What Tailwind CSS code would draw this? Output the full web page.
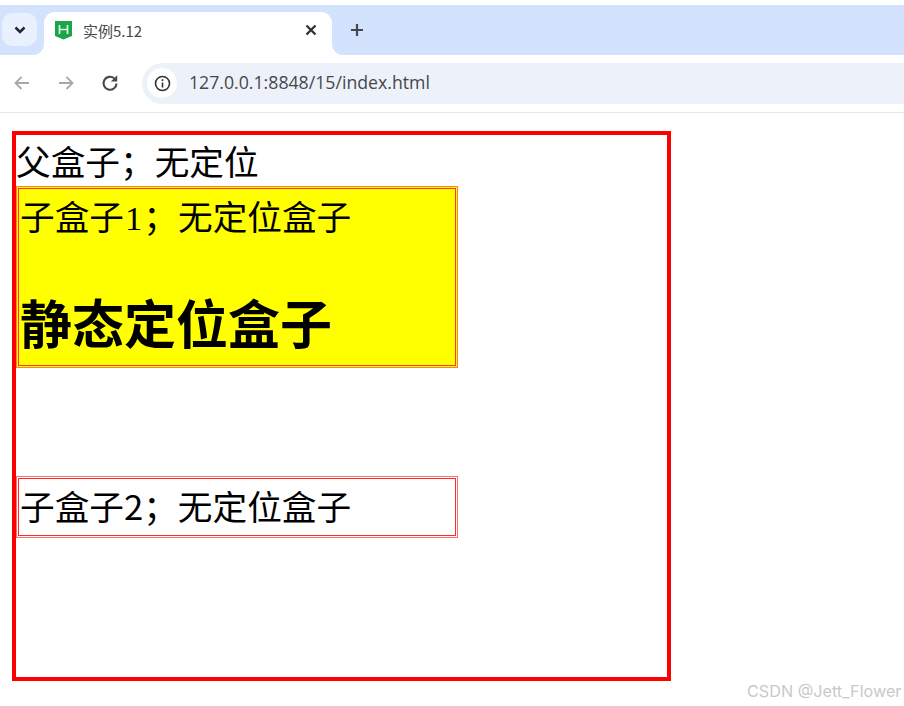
<!DOCTYPE html>
<html lang="zh">
<head>
    <meta charset="UTF-8">
    <title>实例5.12</title>
    <script src="https://cdn.jsdelivr.net/npm/@tailwindcss/browser@4"></script>
</head>
<body class="relative h-[706px] w-[904px] overflow-hidden bg-white font-['Noto_Sans_CJK_SC',sans-serif] text-black">
    <!-- tab strip -->
    <div class="mt-[5px] flex h-[50px] items-end bg-[#d3e3fd] pl-[2px]">
        <div class="mb-[9px] flex h-[33px] w-[35px] items-center justify-center rounded-[10px] bg-[#e9f0fe]">
            <svg class="h-[18px] w-[18px]" viewBox="0 0 18 18" fill="none" stroke="#1f2937" stroke-width="2.600"><path d="M4.500 6.500L9 11l4.500-4.500"/></svg>
        </div>
        <div class="relative ml-[7px] flex h-[43px] w-[288px] items-center rounded-t-[11px] bg-white pb-[7px] pl-[11px]">
            <svg class="absolute bottom-0 left-[-11px] h-[11px] w-[11px]" viewBox="0 0 11 11"><path d="M11 0v11H0a11 11 0 0 0 11-11z" fill="#fff"/></svg>
            <svg class="absolute bottom-0 right-[-11px] h-[11px] w-[11px]" viewBox="0 0 11 11"><path d="M0 0v11h11A11 11 0 0 1 0 0z" fill="#fff"/></svg>
            <svg class="h-[20px] w-[17px]" viewBox="0 0 17 20"><path d="M0 1h17v15l-8.500 3.500L0 16z" fill="#1aa548"/><path d="M4.500 5v9M12.500 5v9M4.500 9.500h8" stroke="#dff5e4" stroke-width="1.700" fill="none"/></svg>
            <span class="ml-[11px] text-[15px] leading-none text-[#45474a]">实例5.12</span>
            <svg class="ml-[163px] h-3 w-3" viewBox="0 0 12 12" stroke="#303134" stroke-width="2.300" fill="none"><path d="M1.500 1.500l9 9M10.500 1.500l-9 9"/></svg>
        </div>
        <svg class="mb-[18px] ml-[18px] h-[14px] w-[14px]" viewBox="0 0 14 14" stroke="#45474a" stroke-width="2.200" fill="none"><path d="M7 1v12M1 7h12"/></svg>
    </div>

    <!-- toolbar -->
    <div class="flex h-[58px] items-center border-b border-[#e6e6e6] bg-white pb-[1px]">
        <svg class="ml-[13px] h-[18px] w-[18px]" viewBox="0 0 18 18" stroke="#a6a8aa" stroke-width="1.800" fill="none"><path d="M16 9H2.500M8.500 3l-6 6 6 6"/></svg>
        <svg class="ml-[26px] h-[18px] w-[18px]" viewBox="0 0 18 18" stroke="#a6a8aa" stroke-width="1.800" fill="none"><path d="M2 9h13.500M9.500 3l6 6-6 6"/></svg>
        <svg class="ml-[26px] h-[18px] w-[18px]" viewBox="0 0 18 18" stroke="#45474a" stroke-width="2.100" fill="none"><path d="M15.500 9.500A6.500 6.500 0 1 1 13.200 4.300"/><path d="M16.200 1.200v6.300h-6.300z" fill="#45474a" stroke="none"/></svg>
        <div class="ml-[23px] flex h-[41px] flex-1 items-center rounded-l-[21px] bg-[#edf2fa] pl-[5px]">
            <div class="flex h-[30px] w-[30px] items-center justify-center rounded-full bg-white">
                <svg class="h-[17px] w-[17px]" viewBox="0 0 17 17" fill="none" stroke="#303134" stroke-width="1.600"><circle cx="8.500" cy="8.500" r="7"/><path d="M8.500 7.500v5"/><path d="M8.500 4.200v1.800"/></svg>
            </div>
            <span class="ml-[12px] font-['Open_Sans',sans-serif] text-[17.700px] leading-none text-[#45474a]">127.0.0.1:8848/15/index.html</span>
        </div>
    </div>

    <!-- page content -->
    <div class="ml-[12px] mt-[18px] h-[550px] w-[659px] border-4 border-[#ff0000] text-[34.670px] leading-[51px]">
        <p class="h-[51px]">父盒子；无定位</p>
        <div class="h-[182px] w-[442px] border border-[#ff7a50] bg-[#ffff00] p-px">
            <div class="h-full border border-[#ff3a10] pl-px">
                <p class="h-[52px] pt-[1px]">子盒子<span class="mx-px font-['Liberation_Serif',serif]">1</span>；无定位盒子</p>
                <h1 class="mt-[43px] text-[52px] font-bold leading-[76px]">静态定位盒子</h1>
            </div>
        </div>
        <div class="mt-[108px] h-[62px] w-[442px] border border-[#ff7070] p-px">
            <div class="h-full border border-[#ff2a2a] pl-px pt-[1px]">子盒子2；无定位盒子</div>
        </div>
    </div>

    <span class="absolute left-[747px] top-[681px] font-['Inter',sans-serif] text-[16.200px] leading-[20px] text-[#c9c9c9]">CSDN @Jett_Flower</span>
</body>
</html>
